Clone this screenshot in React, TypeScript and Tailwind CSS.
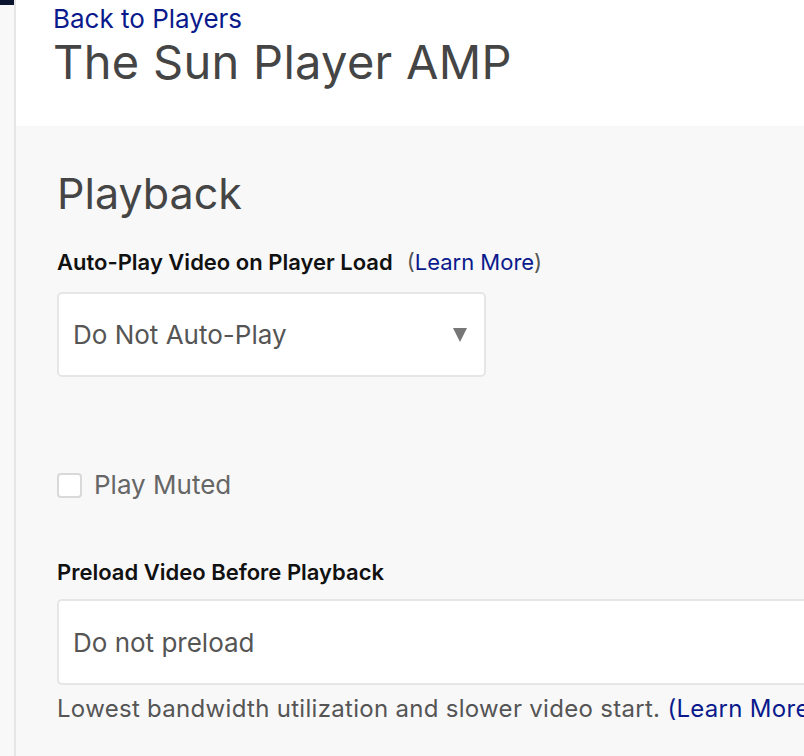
export default function App() {
  return (
    <div className="flex min-h-[756px] w-full overflow-hidden bg-[#f8f8f8] font-['Inter',sans-serif]">
      <aside className="flex w-[16px] shrink-0 flex-col border-r-2 border-[#e6e6e6] bg-[#f8f8f8]">
        <div className="h-[5px] w-full bg-[#0b1530]" />
      </aside>
      <main className="flex min-w-0 flex-1 flex-col">
        <header className="h-[126px] bg-white pl-[37px] pt-[4px]">
          <a href="#" className="block text-[26px] leading-[30px] text-[#0a1a8c]">
            Back to Players
          </a>
          <h1 className="text-[47px] leading-[56px] font-normal tracking-[0.3px] text-[#454545]">
            The Sun Player AMP
          </h1>
        </header>
        <section className="flex flex-col pl-[41px] pt-[42px]">
          <h2 className="text-[43px] leading-[50px] text-[#454545]">Playback</h2>
          <div className="mt-[30px] flex items-baseline gap-[14px] text-[22px] leading-[28px]">
            <span className="font-semibold text-[#111]">Auto-Play Video on Player Load</span>
            <span className="text-[#555]">
              (<a href="#" className="text-[#0a1a8c]">Learn More</a>)
            </span>
          </div>
          <div className="mt-[16px] flex h-[85px] w-[429px] items-center justify-between rounded-[5px] border-2 border-[#e6e6e6] bg-white pl-[14px] pr-[16px]">
            <span className="text-[26px] text-[#555]">Do Not Auto-Play</span>
            <svg width="16" height="16" viewBox="0 0 16 16">
              <path d="M1 1 L15 1 L8 15 Z" fill="#777" />
            </svg>
          </div>
          <label className="mt-[93px] flex items-center gap-[12px]">
            <span className="h-[25px] w-[25px] rounded-[4px] border-2 border-[#d9d9d9] bg-white" />
            <span className="text-[26px] leading-[30px] text-[#666]">Play Muted</span>
          </label>
          <div className="mt-[58px] text-[22px] leading-[28px] font-semibold text-[#111]">
            Preload Video Before Playback
          </div>
          <div className="mt-[13px] flex h-[86px] items-center rounded-l-[5px] border-2 border-r-0 border-[#e6e6e6] bg-white pl-[14px]">
            <span className="text-[26px] text-[#555]">Do not preload</span>
          </div>
          <p className="mt-[9px] whitespace-nowrap text-[24px] leading-[30px] tracking-[0.3px] text-[#555]">
            Lowest bandwidth utilization and slower video start.{" "}
            <a href="#" className="text-[#0a1a8c]">(Learn More)</a>
          </p>
        </section>
      </main>
    </div>
  );
}
